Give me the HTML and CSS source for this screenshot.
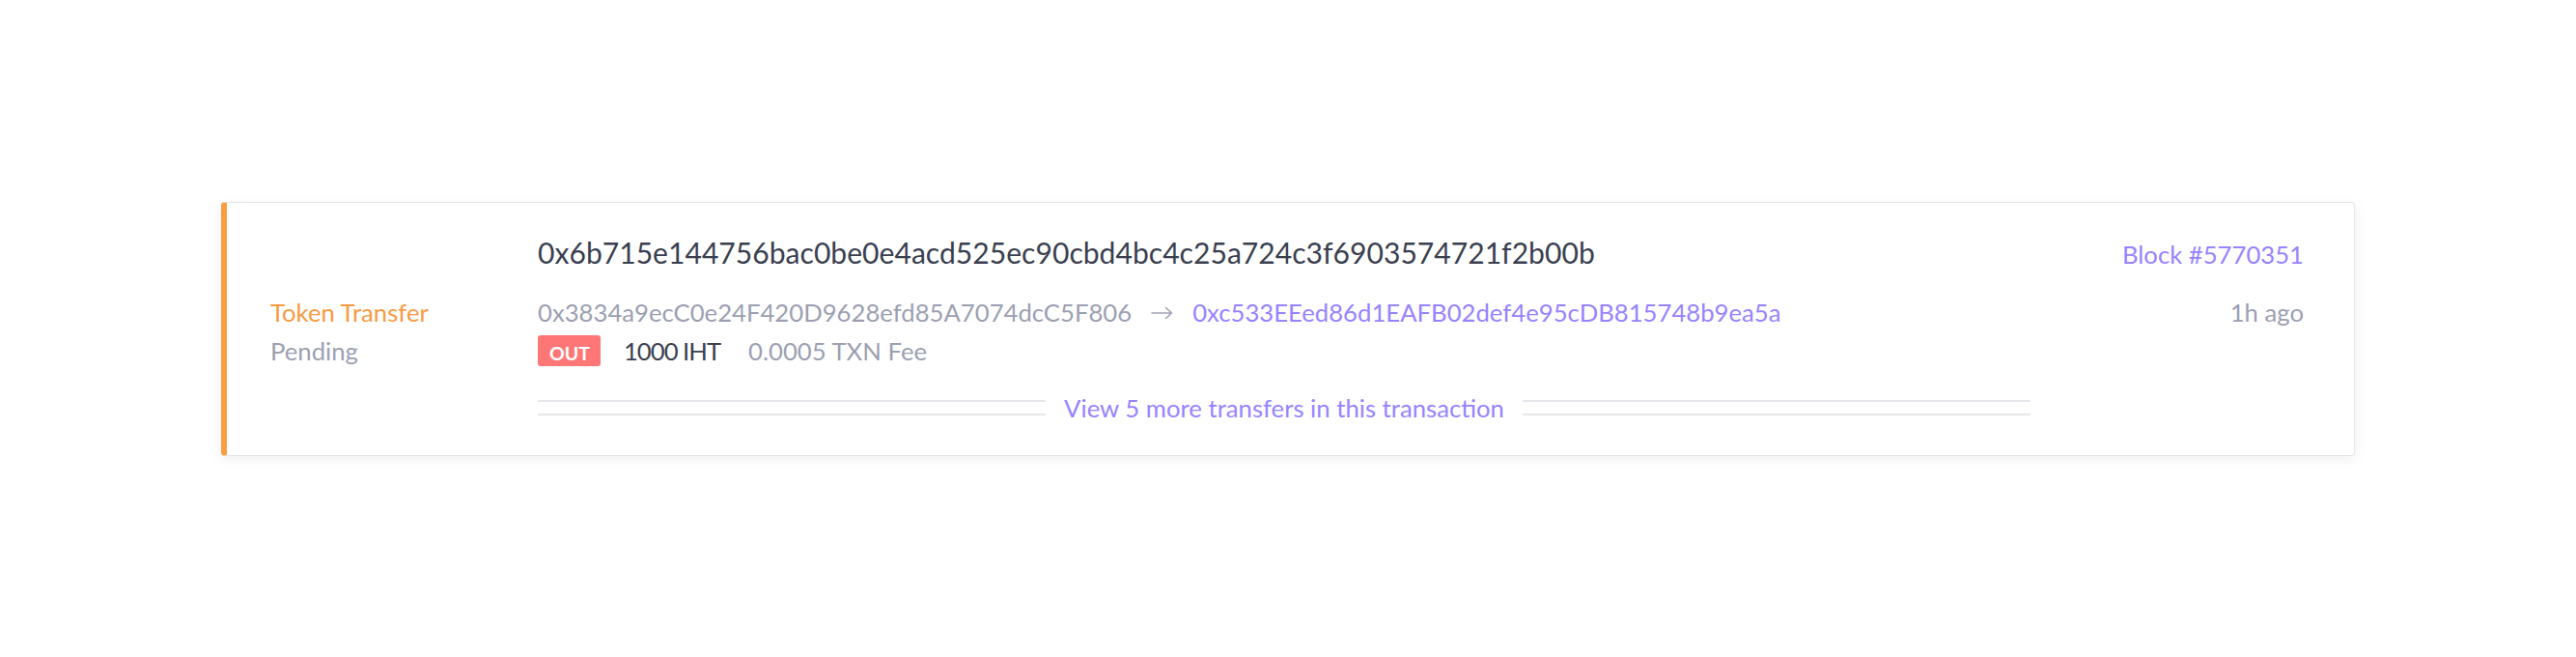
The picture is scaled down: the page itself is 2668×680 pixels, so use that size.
FILE: index.html
```html
<!DOCTYPE html>
<html lang="en">
<head>
<meta charset="utf-8">
<title>Token Transfer</title>
<link rel="stylesheet" href="styles.css">
</head>
<body>
<main class="page">
  <article class="tx-card">
    <div class="tx-row tx-row--head">
      <div class="col-left"></div>
      <div class="col-main"><span class="tx-hash">0x6b715e144756bac0be0e4acd525ec90cbd4bc4c25a724c3f6903574721f2b00b</span></div>
      <div class="col-right"><a class="link" href="#">Block #5770351</a></div>
    </div>
    <div class="tx-row tx-row--addr">
      <div class="col-left"><span class="tx-type">Token Transfer</span></div>
      <div class="col-main addr-line">
        <span class="addr addr--from">0x3834a9ecC0e24F420D9628efd85A7074dcC5F806</span>
        <svg class="arrow" width="23" height="14" viewBox="0 0 23 14" aria-hidden="true"><path d="M1 7H21.5M15.5 1.5L21.5 7L15.5 12.5" fill="none" stroke="#a0a3b6" stroke-width="1.6" stroke-linecap="round" stroke-linejoin="round"/></svg>
        <a class="addr link" href="#">0xc533EEed86d1EAFB02def4e95cDB815748b9ea5a</a>
      </div>
      <div class="col-right"><span class="muted">1h ago</span></div>
    </div>
    <div class="tx-row tx-row--value">
      <div class="col-left"><span class="muted">Pending</span></div>
      <div class="col-main value-line">
        <span class="badge">OUT</span>
        <span class="amount">1000 IHT</span>
        <span class="muted">0.0005 TXN Fee</span>
      </div>
      <div class="col-right"></div>
    </div>
    <div class="tx-row tx-row--more">
      <div class="col-left"></div>
      <div class="col-main more">
        <a class="link more__text" href="#">View 5 more transfers in this transaction</a>
      </div>
      <div class="col-right"></div>
    </div>
  </article>
</main>
</body>
</html>
```
FILE: styles.css
```css
* { box-sizing: border-box; }

html, body {
  margin: 0;
  padding: 0;
  background: #ffffff;
}

body {
  font-family: "Lato", "Open Sans", sans-serif;
  font-size: 25.7px;
  line-height: 36px;
  color: #3b4051;
}

.page {
  min-height: 100vh;
  display: flex;
  align-items: center;
  justify-content: center;
}

.tx-card {
  width: 2210px;
  background: #fff;
  border: 1px solid #e6e6e9;
  border-left: 6px solid #f99d42;
  border-radius: 4px;
  box-shadow: 0 3px 14px rgba(0, 0, 0, 0.07);
  padding: 31px 52px 31px 45px;
  display: flex;
  flex-direction: column;
}

.tx-row {
  display: grid;
  grid-template-columns: 277px 1fr 283px;
  align-items: baseline;
}

.tx-row--head { margin-bottom: 24px; }
.tx-row--addr { margin-bottom: 4px; }
.tx-row--value { margin-bottom: 23px; }

.col-right { text-align: right; }

.tx-hash {
  font-size: 30.1px;
  line-height: 40px;
  color: #3a3f50;
}

.link {
  color: #9783ff;
  text-decoration: none;
}

.muted { color: #9c9fb2; }

.tx-type { color: #f89a42; }

.addr-line {
  display: flex;
  align-items: baseline;
  gap: 20px;
}

.addr--from { color: #9c9fb2; }

.arrow {
  align-self: center;
  position: relative;
  top: 1px;
}

.value-line {
  display: flex;
  align-items: baseline;
}

.badge {
  display: inline-block;
  background: #ff7676;
  color: #fff;
  font-weight: 700;
  font-size: 19.5px;
  line-height: 24px;
  padding: 6.5px 11px 1.5px 12px;
  border-radius: 3px;
  margin-right: 24px;
}

.amount {
  color: #3a3f50;
  letter-spacing: -1px;
  margin-right: 29px;
}

.more {
  display: flex;
  align-items: center;
  gap: 19px;
}

.more::before,
.more::after {
  content: "";
  flex: 1;
  height: 12px;
  border-top: 2px solid #e7e7eb;
  border-bottom: 2px solid #e7e7eb;
}

.more__text { white-space: nowrap; }
```
